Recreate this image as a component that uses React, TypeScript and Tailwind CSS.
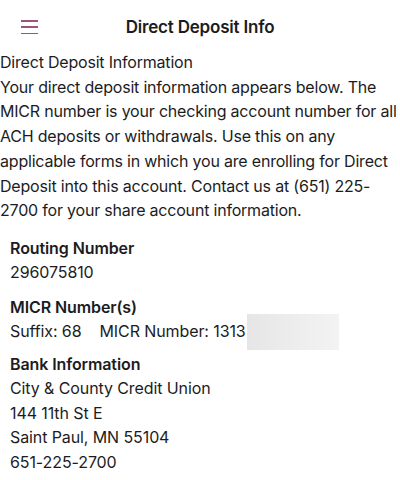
export default function App() {
  return (
    <div className="w-[400px] h-[480px] bg-white overflow-hidden text-[#1c1c1e]" style={{ fontFamily: 'Inter, "Noto Sans", sans-serif' }}>
      <header className="relative h-[50px] pt-[5px] flex items-center justify-center">
        <button className="absolute left-[21px] top-[19px] w-[17px] h-[16px] flex flex-col justify-between py-[1px]">
          <span className="block h-[1.5px] w-full bg-[#a0527f]" />
          <span className="block h-[1.5px] w-full bg-[#a0527f]" />
          <span className="block h-[1.5px] w-full bg-[#a0527f]" />
        </button>
        <h1 className="text-[17px] font-semibold tracking-[-0.2px]">Direct Deposit Info</h1>
      </header>

      <div className="text-[16px] leading-[24.7px] tracking-[-0.2px]">
        <p>Direct Deposit Information</p>
        <p>
          Your direct deposit information appears below. The MICR number is your checking account number for all ACH
          deposits or withdrawals. Use this on any applicable forms in which you are enrolling for Direct Deposit into
          this account. Contact us at (651) 225-2700 for your share account information.
        </p>
      </div>

      <div className="px-[10px] pt-[13px] text-[16px] leading-[24.5px] tracking-[-0.1px]">
        <div>
          <p className="font-semibold">Routing Number</p>
          <p>296075810</p>
        </div>
        <div className="mt-[10px]">
          <p className="font-semibold">MICR Number(s)</p>
          <div className="flex items-center h-[24.5px]">
            <span>Suffix: 68</span>
            <span className="ml-[18px]">MICR Number: 1313</span>
            <span className="ml-[1px] w-[92px] h-[36px] shrink-0 bg-gradient-to-r from-[#e6e6e6] to-[#f3f3f3]" />
          </div>
        </div>
        <div className="mt-[8px]">
          <p className="font-semibold">Bank Information</p>
          <p>City &amp; County Credit Union</p>
          <p>144 11th St E</p>
          <p>Saint Paul, MN 55104</p>
          <p>651-225-2700</p>
        </div>
      </div>
    </div>
  );
}
